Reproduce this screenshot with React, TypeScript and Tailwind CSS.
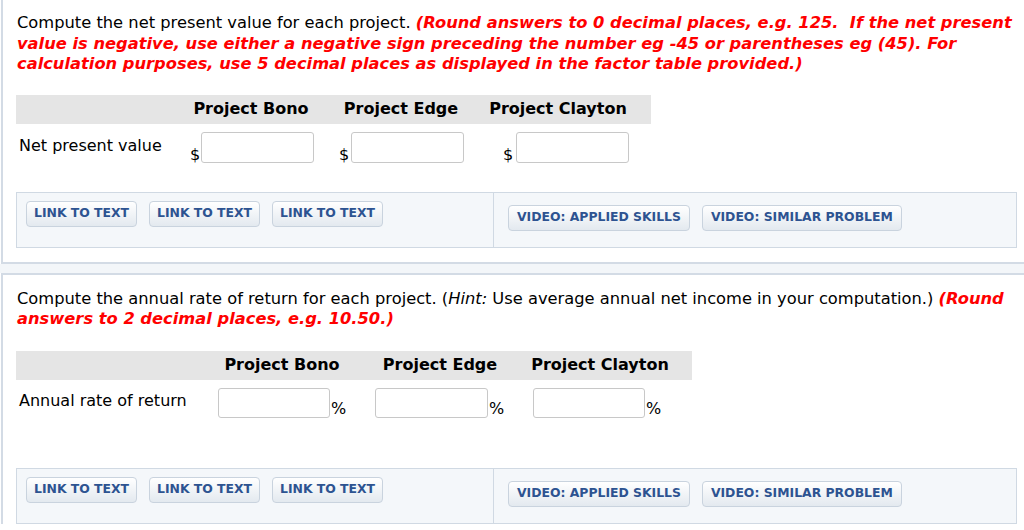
const btn =
  "h-[26px] rounded-[4px] border border-[#c9d3de] bg-linear-to-b from-white to-[#e3e9ef] text-[12.4px] font-bold text-[#2d5391] leading-none whitespace-nowrap";

const red = "text-[#ff0000] font-bold italic";

function Footer({ rightOffset }: { rightOffset: string }) {
  return (
    <div className="flex w-[1001px] h-[56px] border border-[#d0d9e3] bg-[#f4f7fa]">
      <div className="flex gap-[12px] w-[477px] pl-[9px] pt-[8px] border-r border-[#d0d9e3]">
        <button className={`${btn} px-[7px]`}>LINK TO TEXT</button>
        <button className={`${btn} px-[7px]`}>LINK TO TEXT</button>
        <button className={`${btn} px-[7px]`}>LINK TO TEXT</button>
      </div>
      <div className={`flex gap-[12px] pl-[14px] ${rightOffset}`}>
        <button className={`${btn} px-[8px]`}>VIDEO: APPLIED SKILLS</button>
        <button className={`${btn} px-[8px]`}>VIDEO: SIMILAR PROBLEM</button>
      </div>
    </div>
  );
}

const input = "h-[31px] rounded-[3px] border border-[#c8c8c8] bg-white";

export default function App() {
  return (
    <div className="w-[1024px] h-[530px] overflow-hidden bg-white text-black font-['DejaVu_Sans','Liberation_Sans',sans-serif] text-[16px]">
      {/* Net present value */}
      <section className="ml-px border-l-2 border-b-2 border-[#d3dbe5] pl-[13px] pt-[13px] pb-[14px]">
        <p className="pl-px text-[16.3px] leading-[20.5px] whitespace-nowrap">
          Compute the net present value for each project.{" "}
          <span className={red}>
            (Round answers to 0 decimal places, e.g. 125.&nbsp; If the net present
            <br />
            value is negative, use either a negative sign preceding the number eg -45 or parentheses eg (45). For
            <br />
            calculation purposes, use 5 decimal places as displayed in the factor table provided.)
          </span>
        </p>

        <div className="mt-[20px] flex w-[635px] h-[29px] items-center bg-[#e5e5e5] font-bold">
          <div className="w-[160px]" />
          <div className="w-[150px] text-center">Project Bono</div>
          <div className="w-[150px] text-center">Project Edge</div>
          <div className="w-[164px] text-center">Project Clayton</div>
        </div>

        <div className="flex pt-[8px]">
          <div className="w-[160px] pl-[3px] pt-[4px] leading-[20px]">Net present value</div>
          <div className="flex w-[150px] items-end pl-[14px]">
            <span className="leading-[20px] w-[11px] translate-y-[2px]">$</span>
            <div className={`${input} w-[113px]`} />
          </div>
          <div className="flex w-[150px] items-end pl-[13px]">
            <span className="leading-[20px] w-[12px] translate-y-[2px]">$</span>
            <div className={`${input} w-[113px]`} />
          </div>
          <div className="flex w-[164px] items-end pl-[27px]">
            <span className="leading-[20px] w-[13px] translate-y-[2px]">$</span>
            <div className={`${input} w-[113px]`} />
          </div>
        </div>

        <div className="mt-[29px]">
          <Footer rightOffset="pt-[12px]" />
        </div>
      </section>

      <div className="h-[9px] bg-[#f3f6f9]" />

      {/* Annual rate of return */}
      <section className="ml-px border-l-2 border-t-2 border-[#d3dbe5] pl-[13px] pt-[14px]">
        <p className="pl-px text-[16.3px] leading-[20.5px] whitespace-nowrap">
          Compute the annual rate of return for each project. (<i>Hint:</i> Use average annual net income in your
          computation.) <span className={red}>(Round</span>
          <br />
          <span className={red}>answers to 2 decimal places, e.g. 10.50.)</span>
        </p>

        <div className="mt-[21px] flex w-[676px] h-[29px] items-center bg-[#e5e5e5] font-bold">
          <div className="w-[187px]" />
          <div className="w-[158px] text-center">Project Bono</div>
          <div className="w-[158px] text-center">Project Edge</div>
          <div className="w-[162px] text-center">Project Clayton</div>
        </div>

        <div className="flex pt-[8px]">
          <div className="w-[187px] pl-[3px] pt-[3px] leading-[20px]">Annual rate of return</div>
          <div className="flex w-[158px] items-end pl-[15px]">
            <div className={`${input} !h-[30px] w-[112px]`} />
            <span className="leading-[18px] pl-px">%</span>
          </div>
          <div className="flex w-[158px] items-end pl-[14px]">
            <div className={`${input} !h-[30px] w-[113px]`} />
            <span className="leading-[18px] pl-px">%</span>
          </div>
          <div className="flex w-[162px] items-end pl-[14px]">
            <div className={`${input} !h-[30px] w-[112px]`} />
            <span className="leading-[18px] pl-px">%</span>
          </div>
        </div>

        <div className="mt-[50px]">
          <Footer rightOffset="pt-[12px]" />
        </div>
      </section>
    </div>
  );
}
